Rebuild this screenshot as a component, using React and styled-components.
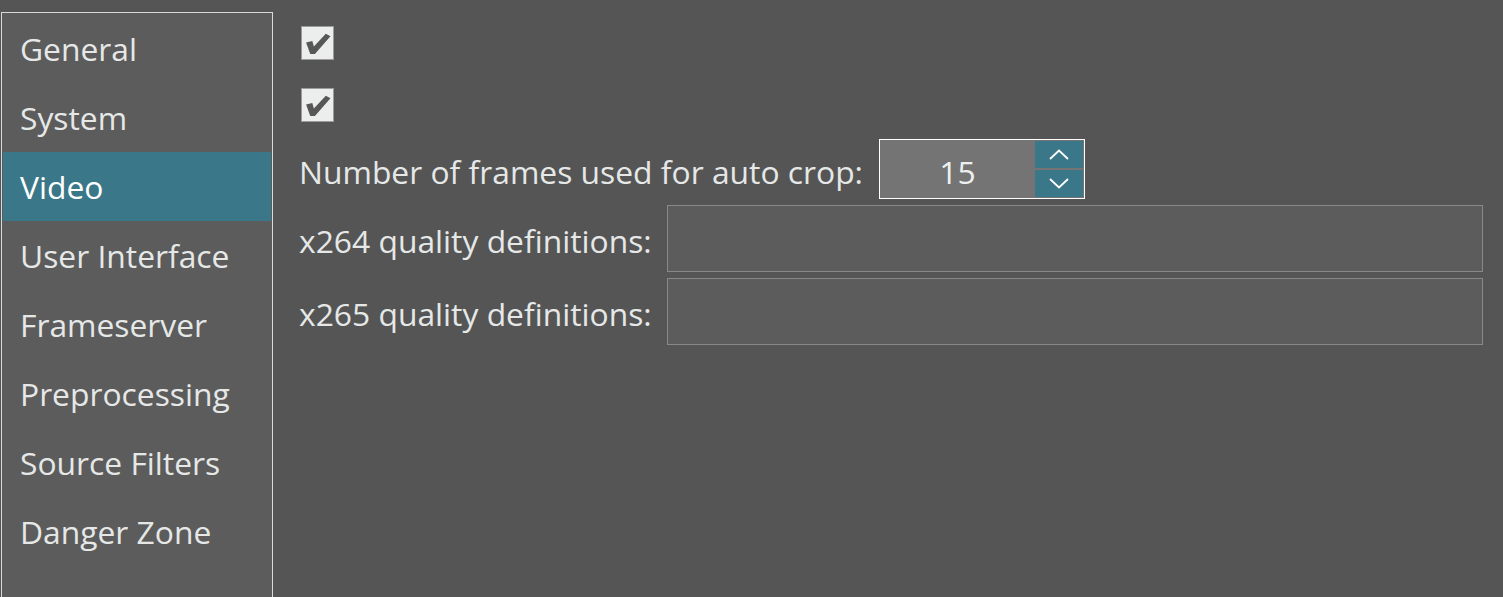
import styled, {createGlobalStyle} from "styled-components";

const Global = createGlobalStyle`
    html, body {
        margin: 0;
        padding: 0;
        background: #545554;
        overflow: hidden;
    }
    body {
        font-family: "Open Sans", "Noto Sans", sans-serif;
        color: #e6e8e8;
    }
`

const Page = styled.div`
    display: flex;
    align-items: flex-start;
    height: 597px;
    overflow: hidden;
    padding-left: 1px;
`

const Sidebar = styled.div`
    margin-top: 12px;
    width: 268px;
    height: 600px;
    padding: 1px;
    border: 1px solid #d8dad9;
    background: #5b5c5b;
`

const NavItem = styled.div`
    height: 69px;
    display: flex;
    align-items: center;
    padding-left: 17px;
    font-size: 31.8px;
    color: ${p => p.active ? "#ffffff" : "#e6e8e8"};
    background: ${p => p.active ? "#3a7788" : "transparent"};
`

const Content = styled.div`
    flex: 1;
    display: flex;
    flex-direction: column;
    padding: 26px 20px 0 26px;
`

const Check = styled.div`
    width: 31px;
    height: 32px;
    border: 1px solid #9a9b9a;
    background: #eceeed;
    display: flex;
    align-items: center;
    justify-content: center;
    margin-left: 2px;
    margin-bottom: ${p => p.gap}px;
`

const Row = styled.div`
    display: flex;
    align-items: center;
    gap: ${p => p.gap}px;
    margin-bottom: ${p => p.below}px;
`

const Label = styled.span`
    font-size: 31.8px;
    padding-top: 4px;
    white-space: nowrap;
`

const Spinner = styled.div`
    display: flex;
    width: 204px;
    height: 58px;
    border: 1px solid #ffffff;
    background: #737473;
`

const SpinValue = styled.div`
    flex: 1;
    display: flex;
    align-items: center;
    justify-content: center;
    padding-top: 4px;
    font-size: 31.8px;
    color: #eef0f0;
`

const SpinButtons = styled.div`
    width: 48px;
    display: flex;
    flex-direction: column;
    gap: 2px;
    padding: 1px 1px 1px 0;
`

const SpinButton = styled.div`
    flex: 1;
    background: #3a7788;
    display: flex;
    align-items: center;
    justify-content: center;
`

const TextBox = styled.div`
    flex: 1;
    height: 65px;
    border: 1px solid #878887;
    background: #5b5c5b;
`

const navItems = ["General", "System", "Video", "User Interface", "Frameserver", "Preprocessing", "Source Filters", "Danger Zone"];

function CheckMark() {
    return (
        <svg width="27" height="25" viewBox="0 0 26 24">
            <path d="M2 11 L8 9.5 L9.5 15 L21 2.5 L25.5 5 L10.5 22 L6 22 Z" fill="#565756"/>
        </svg>
    );
}

function Chevron({up}) {
    return (
        <svg width="20" height="11" viewBox="0 0 20 11">
            <path d={up ? "M1 10 L10 1.5 L19 10" : "M1 1 L10 9.5 L19 1"} fill="none" stroke="#ffffff" strokeWidth="1.8"/>
        </svg>
    );
}

export default function App() {
    return (
        <>
            <Global/>
            <Page>
                <Sidebar>
                    {navItems.map(n => <NavItem key={n} active={n === "Video"}>{n}</NavItem>)}
                </Sidebar>
                <Content>
                    <Check gap={28}><CheckMark/></Check>
                    <Check gap={17}><CheckMark/></Check>
                    <Row gap={16} below={6}>
                        <Label>Number of frames used for auto crop:</Label>
                        <Spinner>
                            <SpinValue>15</SpinValue>
                            <SpinButtons>
                                <SpinButton><Chevron up/></SpinButton>
                                <SpinButton><Chevron/></SpinButton>
                            </SpinButtons>
                        </Spinner>
                    </Row>
                    <Row gap={15} below={6}>
                        <Label>x264 quality definitions:</Label>
                        <TextBox/>
                    </Row>
                    <Row gap={15} below={0}>
                        <Label>x265 quality definitions:</Label>
                        <TextBox/>
                    </Row>
                </Content>
            </Page>
        </>
    );
}
